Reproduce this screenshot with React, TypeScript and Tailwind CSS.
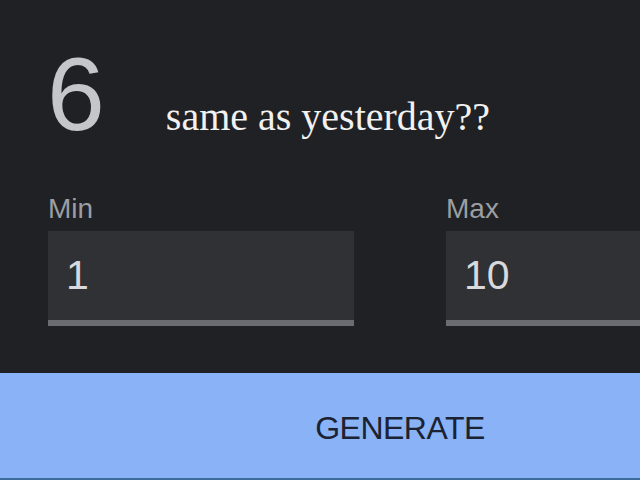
export default function App() {
  return (
    <div className="h-[480px] w-[640px] overflow-hidden bg-[#202124]">
      <div className="flex w-[800px] flex-col">
        {/* Result row */}
        <div className="flex h-[145px] items-baseline pl-[47px] pt-[42px]">
          <span className="text-[104px] font-light leading-none text-[#c5c6ca] [font-family:'Liberation_Sans',Arial,sans-serif]">
            6
          </span>
          <span className="ml-[61px] text-[40px] leading-none text-[#f1f1f1] [font-family:'Liberation_Serif','Times_New_Roman',serif]">
            same as yesterday??
          </span>
        </div>

        {/* Range inputs */}
        <div className="mt-[50px] flex gap-[92px] px-12 [font-family:'Liberation_Sans',Arial,sans-serif]">
          <Field label="Min" value="1" />
          <Field label="Max" value="10" />
        </div>

        {/* Generate */}
        <button className="mt-[47px] flex h-[107px] w-[800px] items-center justify-center border-b-2 border-[#3b6c9c] bg-[#89b2f7] pt-1 text-[32px] leading-none tracking-[-0.5px] text-[#1b2231] [font-family:'Liberation_Sans',Arial,sans-serif]">
          GENERATE
        </button>
      </div>
    </div>
  );
}

function Field({ label, value }: { label: string; value: string }) {
  return (
    <div className="flex w-[306px] flex-col">
      <span className="text-[28px] leading-none text-[#9b9ea3]">{label}</span>
      <div className="mt-2 flex h-[95px] items-center border-b-[6px] border-[#6a6c71] bg-[#303134] pl-[18px]">
        <span className="text-[41px] leading-none text-[#d8d9dc]">{value}</span>
      </div>
    </div>
  );
}
